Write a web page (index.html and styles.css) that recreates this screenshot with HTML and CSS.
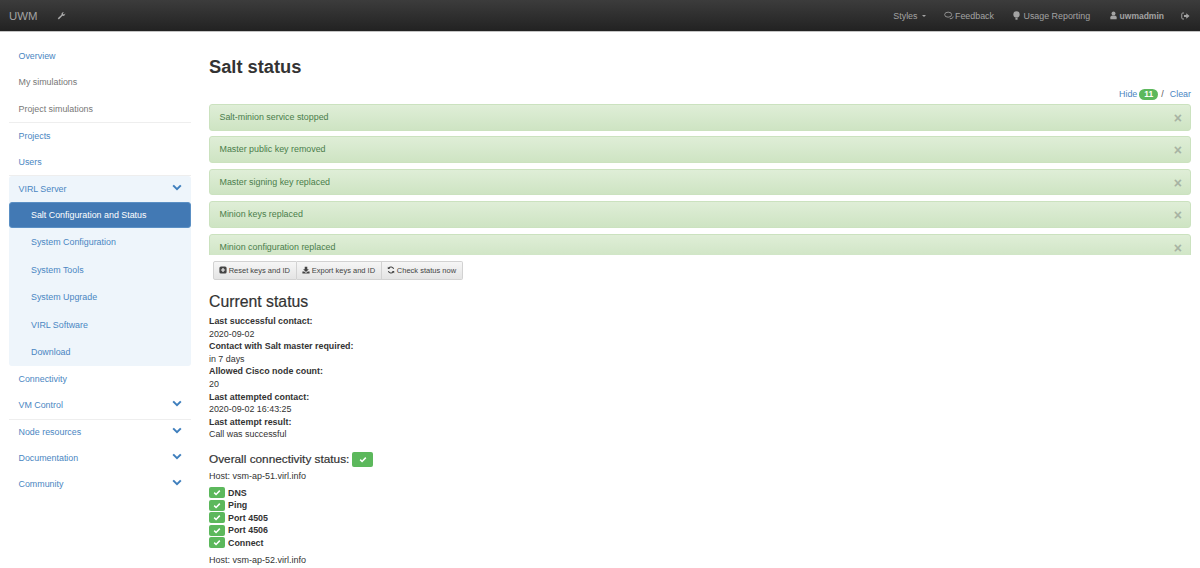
FILE: index.html
```html
<!DOCTYPE html>
<html lang="en">
<head>
<meta charset="utf-8">
<title>Salt status</title>
<link rel="stylesheet" href="styles.css">
</head>
<body>
<svg class="defs" width="0" height="0" aria-hidden="true">
  <symbol id="chev" viewBox="0 0 12 8"><path d="M1.400 1.400 6 6 10.600 1.400" fill="none" stroke="currentColor" stroke-width="2.400"/></symbol>
  <symbol id="check" viewBox="0 0 12 10"><path d="M1.800 5.200 4.600 8 10.200 2.200" fill="none" stroke="currentColor" stroke-width="2.200"/></symbol>
</svg>
<header class="navbar">
  <div class="nav-left">
    <span class="brand">UWM</span>
    <svg class="wrench" viewBox="0 0 12 12"><path d="M1 9.800 6 4.900C5.600 3.200 6.800 1.200 9.300 1.200L7.800 3 8.400 4.200 9.700 4.600 11 3C11.300 5.400 9.300 7 7.200 6.400L2.400 11.200Z" fill="currentColor"/></svg>
  </div>
  <nav class="nav-right">
    <span class="nav-item">Styles <i class="caret"></i></span>
    <span class="nav-item"><svg class="nav-ic nav-ic-wide" viewBox="0 0 12 10"><ellipse cx="5" cy="4" rx="4.200" ry="3" fill="none" stroke="currentColor" stroke-width="1"/><path d="M7 8.800C9 9 11 8 11 6.200" fill="none" stroke="currentColor" stroke-width="1"/></svg>Feedback</span>
    <span class="nav-item"><svg class="nav-ic" viewBox="0 0 10 12"><circle cx="5" cy="4.600" r="4.200" fill="currentColor"/><rect x="3.600" y="9" width="2.800" height="2.600" fill="currentColor"/></svg>Usage Reporting</span>
    <span class="nav-item nav-user"><svg class="nav-ic" viewBox="0 0 10 12"><circle cx="5" cy="3.200" r="2.600" fill="currentColor"/><path d="M.8 11V8.400C.8 6.800 2.400 6 5 6s4.200.8 4.200 2.400V11Z" fill="currentColor"/></svg>uwmadmin</span>
    <svg class="logout" viewBox="0 0 12 10"><path d="M4 1H2.400C1.400 1 1 1.600 1 2.400v5.200C1 8.400 1.400 9 2.400 9H4" fill="none" stroke="currentColor" stroke-width="1.300"/><path d="M4 3.600h3V1.200L11.400 5 7 8.800V6.400H4Z" fill="currentColor"/></svg>
  </nav>
</header>
<div class="page">
  <aside class="sidebar">
    <a class="item link">Overview</a>
    <a class="item">My simulations</a>
    <a class="item">Project simulations</a>
    <hr class="rule">
    <a class="item link">Projects</a>
    <a class="item link">Users</a>
    <hr class="rule">
    <div class="group">
      <a class="item link has-chev">VIRL Server<svg class="chev"><use href="#chev"/></svg></a>
      <a class="sub active">Salt Configuration and Status</a>
      <a class="sub">System Configuration</a>
      <a class="sub">System Tools</a>
      <a class="sub">System Upgrade</a>
      <a class="sub">VIRL Software</a>
      <a class="sub">Download</a>
    </div>
    <a class="item link">Connectivity</a>
    <a class="item link has-chev">VM Control<svg class="chev"><use href="#chev"/></svg></a>
    <hr class="rule rule-tight">
    <a class="item link has-chev">Node resources<svg class="chev"><use href="#chev"/></svg></a>
    <a class="item link has-chev">Documentation<svg class="chev"><use href="#chev"/></svg></a>
    <a class="item link has-chev">Community<svg class="chev"><use href="#chev"/></svg></a>
  </aside>
  <main class="content">
    <h1>Salt status</h1>
    <div class="msg-tools"><a>Hide</a><span class="badge">11</span><span class="slash">/</span><a>Clear</a></div>
    <div class="alerts">
      <div class="alert">Salt-minion service stopped<span class="close">×</span></div>
      <div class="alert">Master public key removed<span class="close">×</span></div>
      <div class="alert">Master signing key replaced<span class="close">×</span></div>
      <div class="alert">Minion keys replaced<span class="close">×</span></div>
      <div class="alert">Minion configuration replaced<span class="close">×</span></div>
    </div>
    <div class="btn-group">
      <button class="btn"><svg class="btn-ic" viewBox="0 0 10 10"><rect x=".5" y=".5" width="9" height="9" rx="2" fill="currentColor"/><path d="M5 2.400v5.200M2.400 5h5.200" stroke="#eee" stroke-width="1.500"/></svg>Reset keys and ID</button>
      <button class="btn"><svg class="btn-ic" viewBox="0 0 10 10"><path d="M3.400.8h3.200v3.400h2L5 7.400 1.400 4.200h2Z" fill="currentColor"/><path d="M.5 7h2.300L5 8.600 7.200 7h2.300v2.500h-9Z" fill="currentColor"/></svg>Export keys and ID</button>
      <button class="btn"><svg class="btn-ic" viewBox="0 0 10 10"><path d="M8.300 3.600A3.500 3.500 0 0 0 2.200 2.700M1.700 6.400A3.500 3.500 0 0 0 7.800 7.300" fill="none" stroke="currentColor" stroke-width="1.400"/><path d="M1 .8v3h3ZM9 9.200v-3H6Z" fill="currentColor"/></svg>Check status now</button>
    </div>
    <h2>Current status</h2>
    <dl class="facts">
      <dt>Last successful contact:</dt><dd>2020-09-02</dd>
      <dt>Contact with Salt master required:</dt><dd>in 7 days</dd>
      <dt>Allowed Cisco node count:</dt><dd>20</dd>
      <dt>Last attempted contact:</dt><dd>2020-09-02 16:43:25</dd>
      <dt>Last attempt result:</dt><dd>Call was successful</dd>
    </dl>
    <h3>Overall connectivity status: <span class="ok ok-lg"><svg class="ok-ic"><use href="#check"/></svg></span></h3>
    <p class="host">Host: vsm-ap-51.virl.info</p>
    <ul class="checks">
      <li><span class="ok"><svg class="ok-ic"><use href="#check"/></svg></span>DNS</li>
      <li><span class="ok"><svg class="ok-ic"><use href="#check"/></svg></span>Ping</li>
      <li><span class="ok"><svg class="ok-ic"><use href="#check"/></svg></span>Port 4505</li>
      <li><span class="ok"><svg class="ok-ic"><use href="#check"/></svg></span>Port 4506</li>
      <li><span class="ok"><svg class="ok-ic"><use href="#check"/></svg></span>Connect</li>
    </ul>
    <p class="host host-next">Host: vsm-ap-52.virl.info</p>
  </main>
</div>
</body>
</html>
```
FILE: styles.css
```css
* { box-sizing: border-box; }
html, body { margin: 0; height: 568px; overflow: hidden; }
body { font-family: "Liberation Sans", Arial, sans-serif; font-size: 8.900px; color: #333; background: #fff; }
.defs { position: absolute; }

.navbar {
  height: 32px;
  display: flex;
  justify-content: space-between;
  align-items: center;
  padding: 0 10px 0 9px;
  background: linear-gradient(#3c3c3c, #222);
  border-bottom: 1px solid #c4c4c4;
  color: #a3a3a3;
}
.nav-left { display: flex; align-items: center; gap: 20px; }
.brand { font-size: 11.400px; }
.wrench { width: 9px; height: 9px; color: #aaa; }
.nav-right { display: flex; align-items: center; }
.nav-item { display: flex; align-items: center; margin-right: 18.500px; white-space: nowrap; }
.nav-ic { width: 9px; height: 9px; margin-right: 2px; }
.nav-ic-wide { width: 10px; margin-right: 1px; }
.caret { display: inline-block; width: 0; height: 0; margin-left: 4px; border: 2.500px solid transparent; border-top-color: #a3a3a3; border-bottom: 0; }
.nav-user { font-weight: bold; font-size: 8.500px; margin-right: 17px; }
.logout { width: 9px; height: 8px; color: #a3a3a3; }

.page { display: flex; padding: 0 9px; }
.sidebar { width: 182px; flex: none; padding-top: 11px; margin-right: 18px; }
.item { display: flex; justify-content: space-between; align-items: center; height: 26.300px; padding: 0 9.500px; color: #777; }
.link { color: #4a86c2; }
.has-chev { padding-right: 9px; }
.chev { width: 10px; height: 7px; color: #3f7fbd; margin-top: -3px; }
.rule { height: 1px; margin: 0 0 -0.500px; border: 0; background: #eee; }
.rule-tight { margin-bottom: -1px; }
.group { margin-top: 0.500px; background: #eef5fb; border-radius: 3px; height: 190px; }
.sub { display: flex; align-items: center; height: 27.500px; padding-left: 22px; color: #4a86c2; }
.group .item { height: 26.500px; }
.sub.active { height: 26px; background: #4279b4; border: 1px solid #5a8fc4; border-radius: 3px; color: #fff; margin-bottom: 0; padding-left: 21px; }

.content { flex: 1; min-width: 0; }
h1 { margin: 0; font-size: 18.300px; font-weight: bold; line-height: 22px; padding-top: 24px; color: #333; }
.msg-tools { display: flex; justify-content: flex-end; align-items: center; height: 16px; margin-top: 8px; color: #4a86c2; line-height: 14px; }
.badge { background: #5cb85c; color: #fff; font-weight: bold; font-size: 8.500px; border-radius: 7px; padding: 0 5px; height: 11px; line-height: 11px; margin: 0 3px 0 2px; }
.slash { color: #555; margin-right: 6px; }
.alerts { height: 151px; margin-top: 2px; overflow: hidden; }
.alert {
  position: relative;
  height: 26.500px;
  line-height: 25px;
  margin-bottom: 5.900px;
  padding-left: 9.500px;
  color: #4a7d4b;
  background: linear-gradient(#dfeed7, #cee4c3);
  border: 1px solid #cbe2bf;
  border-radius: 3px;
}
.close { position: absolute; right: 8px; top: 1px; font-size: 14px; font-weight: bold; color: #a7b3a3; }
.btn-group { display: flex; margin: 5.500px 0 0 3.500px; }
.btn {
  display: flex;
  align-items: center;
  height: 19px;
  padding: 0 5.650px;
  font: inherit;
  font-size: 7.500px;
  color: #444;
  background: linear-gradient(#f6f6f6, #e4e4e4);
  border: 1px solid #d2d2d2;
  border-left-width: 0;
}
.btn:first-child { border-left-width: 1px; border-radius: 2px 0 0 2px; }
.btn:last-child { border-radius: 0 2px 2px 0; }
.btn-ic { width: 8px; height: 8px; margin-right: 1.500px; }
h2 { margin: 14px 0 0; font-size: 15.800px; font-weight: 500; line-height: 16px; -webkit-text-stroke: 0.200px #333; }
.facts { margin: 5.500px 0 0; font-size: 8.900px; line-height: 12.600px; }
.facts dt { font-weight: bold; }
.facts dd { margin: 0; }
h3 { display: flex; align-items: center; gap: 3px; margin: 10.500px 0 0; font-size: 11.800px; font-weight: 500; height: 16px; -webkit-text-stroke: 0.200px #333; }
.host { margin: 3px 0 0; font-size: 9px; line-height: 13px; }
.checks { list-style: none; margin: 3px 0 0; padding: 0; font-size: 8.900px; font-weight: bold; }
.checks li { display: flex; align-items: center; height: 12.500px; }
.ok { display: inline-flex; align-items: center; justify-content: center; width: 16px; height: 11px; margin-right: 3px; background: #5cb85c; border-radius: 2px; color: #fff; }
.ok-lg { width: 21px; height: 15px; margin: 0; }
.ok-ic { width: 8px; height: 7px; }
.host-next { margin-top: 5px; }
```
